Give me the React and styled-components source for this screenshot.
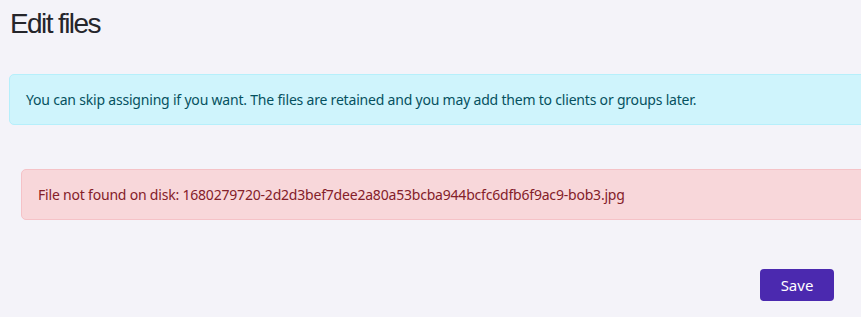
import React from 'react'
import styled, { createGlobalStyle } from 'styled-components'

const GlobalStyle = createGlobalStyle`
  html, body {
    margin: 0;
    padding: 0;
    background-color: #f4f3f9;
    overflow: hidden;
  }
`;

const Page = styled.div`
  width: 900px;
  padding: 0 0 0 9px;
  font-family: "Noto Sans", "Open Sans", sans-serif;
`;

const Title = styled.h3`
  margin: 0;
  padding: 8px 0 0 1px;
  height: 74px;
  box-sizing: border-box;
  font-family: "Liberation Sans", Arial, sans-serif;
  font-size: 28px;
  font-weight: 400;
  letter-spacing: -1.6px;
  line-height: 32px;
  color: #25252b;
`;

const Alert = styled.div`
  box-sizing: border-box;
  height: 51px;
  display: flex;
  align-items: center;
  padding: 0 16px;
  border: 1px solid ${p => p.$border};
  border-radius: 5px;
  background-color: ${p => p.$bg};
  color: ${p => p.$color};
  font-size: 14px;
  letter-spacing: -0.2px;
`;

const FileList = styled.div`
  padding: 44px 0 0 12px;
`;

const Footer = styled.div`
  display: flex;
  justify-content: flex-end;
  width: 825px;
  padding-top: 49px;
`;

const Button = styled.button`
  width: 74px;
  height: 32px;
  border: none;
  border-radius: 4px;
  background-color: #4b29af;
  color: #ffffff;
  font-family: "Noto Sans", "Open Sans", sans-serif;
  font-size: 15px;
  cursor: pointer;
`;

const App = () => {
  return (
    <Page>
      <GlobalStyle />
      <Title>Edit files</Title>
      <Alert $bg="#cff4fc" $border="#b6effb" $color="#055160">
        You can skip assigning if you want. The files are retained and you may add them to clients or groups later.
      </Alert>
      <FileList>
        <Alert $bg="#f8d7da" $border="#f5c2c7" $color="#842029">
          File not found on disk: 1680279720-2d2d3bef7dee2a80a53bcba944bcfc6dfb6f9ac9-bob3.jpg
        </Alert>
      </FileList>
      <Footer>
        <Button>Save</Button>
      </Footer>
    </Page>
  )
}

export default App
